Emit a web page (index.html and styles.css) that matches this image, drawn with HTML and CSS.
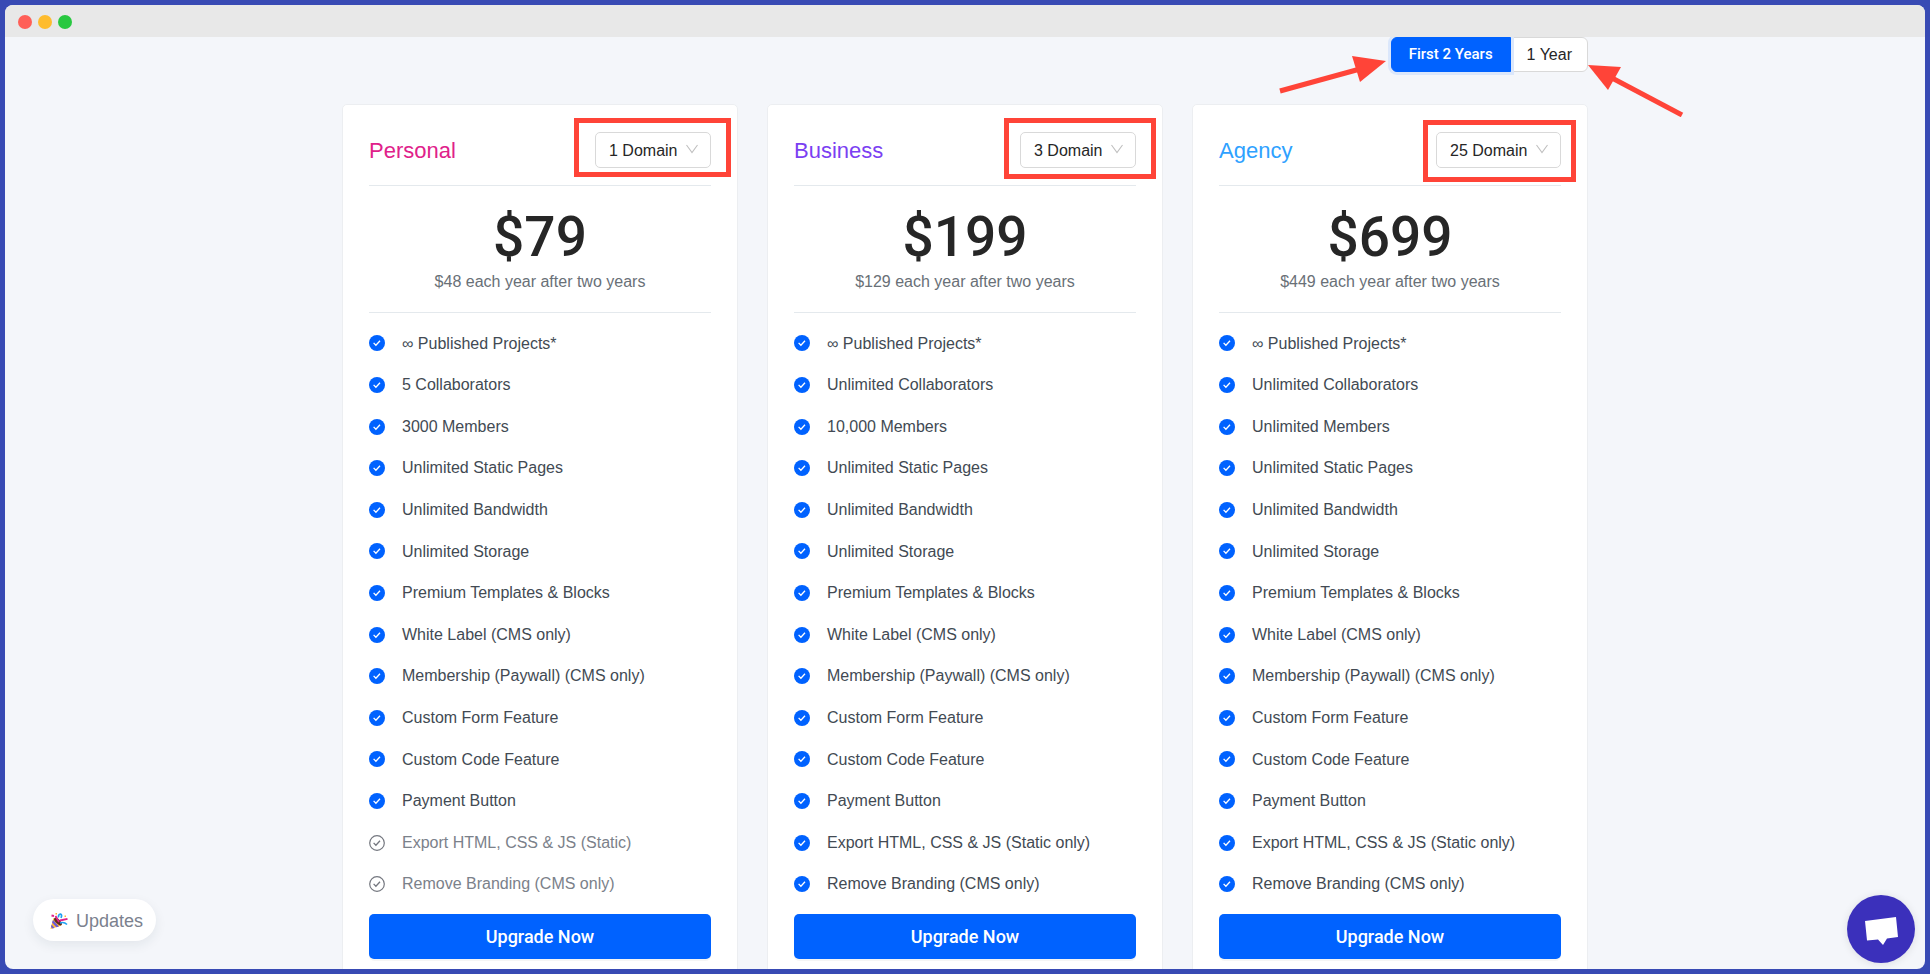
FILE: index.html
```html
<!DOCTYPE html>
<html lang="en">
<head>
  <meta charset="UTF-8">
  <meta name="viewport" content="width=device-width, initial-scale=1">
  <title>Pricing</title>
  <link rel="stylesheet" href="styles.css">
</head>
<body>
  <svg class="sprite" aria-hidden="true">
    <symbol id="check-fill" viewBox="0 0 16 16">
      <circle cx="8" cy="8" r="8" fill="#0062ff"/>
      <path d="M4.600 7.900l2.300 2.300 4.100-4.400" fill="none" stroke="#fff" stroke-width="1.3"/>
    </symbol>
    <symbol id="check-line" viewBox="0 0 16 16">
      <circle cx="8" cy="8" r="7.3" fill="none" stroke="#74777f" stroke-width="1.2"/>
      <path d="M4.600 7.900l2.300 2.300 4.100-4.400" fill="none" stroke="#74777f" stroke-width="1.3"/>
    </symbol>
    <symbol id="chevron" viewBox="0 0 12 10">
      <path d="M.5 1l5.500 7.500 5.500-7.500" fill="none" stroke="#bfbfbf" stroke-width="1.1"/>
    </symbol>
  </svg>

  <div class="window">
    <header class="titlebar">
      <span class="dot red"></span>
      <span class="dot yellow"></span>
      <span class="dot green"></span>
    </header>

    <main class="page">
      <div class="container">
        <div class="toggle">
          <button type="button" class="active">First 2 Years</button>
          <button type="button">1 Year</button>
          <svg class="arrow arrow-left" viewBox="0 0 110 40" aria-hidden="true">
            <path d="M2 37L82 15" stroke="#ff4438" stroke-width="5"/>
            <path d="M74 2l34 5-26 21z" fill="#ff4438"/>
          </svg>
          <svg class="arrow arrow-right" viewBox="0 0 98 54" aria-hidden="true">
            <path d="M94 52L24 15" stroke="#ff4438" stroke-width="5"/>
            <path d="M0 2l33 2-13 23z" fill="#ff4438"/>
          </svg>
        </div>

        <div class="plans">
          <section class="card">
            <div class="card-head">
              <h2 class="pink">Personal</h2>
              <div class="domain">
                <select aria-label="Personal domains"><option>1 Domain</option></select>
                <svg class="chevron"><use href="#chevron"/></svg>
                <span class="mark mark-personal"></span>
              </div>
            </div>
            <div class="price">
              <strong>$79</strong>
              <p>$48 each year after two years</p>
            </div>
            <ul class="features">
              <li><svg><use href="#check-fill"/></svg>∞ Published Projects*</li>
              <li><svg><use href="#check-fill"/></svg>5 Collaborators</li>
              <li><svg><use href="#check-fill"/></svg>3000 Members</li>
              <li><svg><use href="#check-fill"/></svg>Unlimited Static Pages</li>
              <li><svg><use href="#check-fill"/></svg>Unlimited Bandwidth</li>
              <li><svg><use href="#check-fill"/></svg>Unlimited Storage</li>
              <li><svg><use href="#check-fill"/></svg>Premium Templates &amp; Blocks</li>
              <li><svg><use href="#check-fill"/></svg>White Label (CMS only)</li>
              <li><svg><use href="#check-fill"/></svg>Membership (Paywall) (CMS only)</li>
              <li><svg><use href="#check-fill"/></svg>Custom Form Feature</li>
              <li><svg><use href="#check-fill"/></svg>Custom Code Feature</li>
              <li><svg><use href="#check-fill"/></svg>Payment Button</li>
              <li class="off"><svg><use href="#check-line"/></svg>Export HTML, CSS &amp; JS (Static)</li>
              <li class="off"><svg><use href="#check-line"/></svg>Remove Branding (CMS only)</li>
            </ul>
            <button type="button" class="upgrade">Upgrade Now</button>
          </section>

          <section class="card">
            <div class="card-head">
              <h2 class="purple">Business</h2>
              <div class="domain">
                <select aria-label="Business domains"><option>3 Domain</option></select>
                <svg class="chevron"><use href="#chevron"/></svg>
                <span class="mark mark-business"></span>
              </div>
            </div>
            <div class="price">
              <strong>$199</strong>
              <p>$129 each year after two years</p>
            </div>
            <ul class="features">
              <li><svg><use href="#check-fill"/></svg>∞ Published Projects*</li>
              <li><svg><use href="#check-fill"/></svg>Unlimited Collaborators</li>
              <li><svg><use href="#check-fill"/></svg>10,000 Members</li>
              <li><svg><use href="#check-fill"/></svg>Unlimited Static Pages</li>
              <li><svg><use href="#check-fill"/></svg>Unlimited Bandwidth</li>
              <li><svg><use href="#check-fill"/></svg>Unlimited Storage</li>
              <li><svg><use href="#check-fill"/></svg>Premium Templates &amp; Blocks</li>
              <li><svg><use href="#check-fill"/></svg>White Label (CMS only)</li>
              <li><svg><use href="#check-fill"/></svg>Membership (Paywall) (CMS only)</li>
              <li><svg><use href="#check-fill"/></svg>Custom Form Feature</li>
              <li><svg><use href="#check-fill"/></svg>Custom Code Feature</li>
              <li><svg><use href="#check-fill"/></svg>Payment Button</li>
              <li><svg><use href="#check-fill"/></svg>Export HTML, CSS &amp; JS (Static only)</li>
              <li><svg><use href="#check-fill"/></svg>Remove Branding (CMS only)</li>
            </ul>
            <button type="button" class="upgrade">Upgrade Now</button>
          </section>

          <section class="card">
            <div class="card-head">
              <h2 class="sky">Agency</h2>
              <div class="domain">
                <select aria-label="Agency domains"><option>25 Domain</option></select>
                <svg class="chevron"><use href="#chevron"/></svg>
                <span class="mark mark-agency"></span>
              </div>
            </div>
            <div class="price">
              <strong>$699</strong>
              <p>$449 each year after two years</p>
            </div>
            <ul class="features">
              <li><svg><use href="#check-fill"/></svg>∞ Published Projects*</li>
              <li><svg><use href="#check-fill"/></svg>Unlimited Collaborators</li>
              <li><svg><use href="#check-fill"/></svg>Unlimited Members</li>
              <li><svg><use href="#check-fill"/></svg>Unlimited Static Pages</li>
              <li><svg><use href="#check-fill"/></svg>Unlimited Bandwidth</li>
              <li><svg><use href="#check-fill"/></svg>Unlimited Storage</li>
              <li><svg><use href="#check-fill"/></svg>Premium Templates &amp; Blocks</li>
              <li><svg><use href="#check-fill"/></svg>White Label (CMS only)</li>
              <li><svg><use href="#check-fill"/></svg>Membership (Paywall) (CMS only)</li>
              <li><svg><use href="#check-fill"/></svg>Custom Form Feature</li>
              <li><svg><use href="#check-fill"/></svg>Custom Code Feature</li>
              <li><svg><use href="#check-fill"/></svg>Payment Button</li>
              <li><svg><use href="#check-fill"/></svg>Export HTML, CSS &amp; JS (Static only)</li>
              <li><svg><use href="#check-fill"/></svg>Remove Branding (CMS only)</li>
            </ul>
            <button type="button" class="upgrade">Upgrade Now</button>
          </section>
        </div>
      </div>
    </main>

    <button type="button" class="updates">
      <svg viewBox="0 0 18 18" aria-hidden="true">
        <path d="M3.500 6l8 7.500L.5 17z" fill="#ffb636"/>
        <path d="M3 8l6 6.500-2.500.8-4.500-4.800zM1.500 12.500l3 3.500-2 .6-1.500-1.600z" fill="#6b5bd6"/>
        <ellipse cx="8" cy="9.500" rx="2.200" ry="5" transform="rotate(-45 8 9.500)" fill="#5c2b20"/>
        <path d="M1.500 3.500l2.500.5M5.500 4l3.500 6M10 8.500l7.500-1.700" stroke="#e0218a" stroke-width="1.800" fill="none"/>
        <path d="M8.500 5.500q-.5-3 2-3.500 2 1 .5 4M10 11q4-1.500 7 1.500" stroke="#1da1f2" stroke-width="1.600" fill="none"/>
        <path d="M5.500 1H7v1.500H5.500zM14.500 3.500H16V5h-1.500z" fill="#ffb636"/>
      </svg>
      Updates
    </button>

    <button type="button" class="chat" aria-label="Open chat">
      <svg viewBox="0 0 34 30" aria-hidden="true">
        <path d="M1 5l31-4 2 20-11 1.500-4 6.500-5-5.500-11 1z" fill="#fff"/>
      </svg>
    </button>
  </div>
</body>
</html>
```
FILE: styles.css
```css
* {
  box-sizing: border-box;
}
body {
  margin: 0;
  height: 100vh;
  padding: 5px;
  background: #384ab4;
  font-family: "Liberation Sans", Arial, sans-serif;
  font-size: 16px;
  line-height: 1.6;
  color: #262626;
}
button, select {
  font: inherit;
  color: inherit;
}
.sprite {
  display: none;
}
.window {
  position: relative;
  display: flex;
  flex-direction: column;
  height: 100%;
  border-radius: 8px;
  overflow: hidden;
  background: #f4f6fa;
}
.titlebar {
  display: flex;
  flex: none;
  align-items: center;
  gap: 6px;
  height: 32px;
  padding: 2px 13px 0;
  background: #e8e8e8;
}
.dot {
  width: 14px;
  height: 14px;
  border-radius: 50%;
}
.red { background: #ff5f57; }
.yellow { background: #febc2e; }
.green { background: #28c840; }

.page {
  flex: 1;
  min-height: 0;
  overflow: hidden;
}
.container {
  max-width: 1246px;
  margin: 0 auto;
}

/* billing period */
.toggle {
  position: relative;
  display: flex;
  width: max-content;
  margin: 0 0 32px auto;
}
.toggle button {
  height: 35px;
  padding: 0 15px;
  border: 1px solid #d9d9d9;
  border-radius: 0 6px 6px 0;
  background: #fff;
  line-height: 1;
}
.toggle .active {
  padding: 0 17px;
  border-color: #0062ff;
  border-radius: 6px 0 0 6px;
  background: #0062ff;
  box-shadow: 0 0 0 3px #dbe7fb;
  color: #fff;
  font-family: Roboto, sans-serif;
  font-size: 15px;
  font-weight: 500;
  z-index: 1;
}
.arrow {
  position: absolute;
}
.arrow-left {
  width: 110px;
  height: 40px;
  top: 17px;
  right: 200px;
}
.arrow-right {
  width: 98px;
  height: 54px;
  top: 26px;
  left: 100%;
}

/* plans */
.plans {
  display: grid;
  grid-template-columns: repeat(3, 1fr);
  gap: 29px;
}
.card {
  padding: 0 26px 26px;
  border: 1px solid #eceef1;
  border-radius: 5px;
  background: #fff;
}
.card-head {
  display: flex;
  align-items: center;
  justify-content: space-between;
  height: 81px;
  padding-top: 10px;
  border-bottom: 1px solid #e4e9ed;
}
.card-head h2 {
  margin: 0;
  padding-top: 2px;
  font-size: 22px;
  font-weight: 400;
}
.pink { color: #e0218a; }
.purple { color: #7b3ff2; }
.sky { color: #2ea1ff; }
.domain {
  position: relative;
}
.domain select {
  display: block;
  height: 36px;
  padding: 2px 32px 0 13px;
  border: 1px solid #d9d9d9;
  border-radius: 5px;
  background: #fff;
  appearance: none;
}
.chevron {
  position: absolute;
  top: 12px;
  right: 13px;
  width: 12px;
  height: 10px;
  pointer-events: none;
}
.mark {
  position: absolute;
  border: 5px solid #ff4438;
  pointer-events: none;
}
.mark-personal { inset: -14px -20px -9px -21px; }
.mark-business { inset: -14px -20px -11px -16px; }
.mark-agency { inset: -12px -15px -14px -13px; }

.price {
  padding: 20px 0 17px;
  border-bottom: 1px solid #e4e9ed;
  text-align: center;
}
.price strong {
  display: block;
  font-family: Roboto, sans-serif;
  font-size: 55px;
  font-weight: 500;
  line-height: 63px;
}
.price p {
  margin: 0;
  color: #697077;
}
.features {
  margin: 0;
  padding: 18px 0 1px;
  list-style: none;
  color: #424a53;
}
.features li {
  display: flex;
  align-items: center;
  gap: 17px;
  margin-bottom: 16px;
}
.features svg {
  width: 16px;
  height: 16px;
}
.features .off {
  color: #7b818a;
}
.upgrade {
  width: 100%;
  height: 45px;
  padding: 2px 0 0;
  border: 0;
  border-radius: 5px;
  background: #0062ff;
  box-shadow: 0 2px 0 rgba(0, 0, 0, 0.04);
  color: #fff;
  font-family: Roboto, sans-serif;
  font-size: 18px;
  font-weight: 500;
}

/* floating widgets */
.updates {
  position: absolute;
  left: 28px;
  bottom: 28px;
  display: flex;
  align-items: center;
  gap: 8px;
  height: 42px;
  padding: 2px 13px 0 17px;
  border: 0;
  border-radius: 21px;
  background: #fff;
  box-shadow: 0 4px 12px rgba(30, 50, 70, 0.08);
  color: #7b818e;
  font-size: 18px;
}
.updates svg {
  width: 18px;
  height: 18px;
}
.chat {
  position: absolute;
  right: 10px;
  bottom: 6px;
  display: grid;
  place-items: center;
  width: 68px;
  height: 68px;
  padding: 3px 0 0;
  border: 0;
  border-radius: 50%;
  background: #3b30bb;
  box-shadow: 0 1px 8px rgba(0, 0, 0, 0.1);
}
.chat svg {
  width: 34px;
  height: 30px;
}
```
